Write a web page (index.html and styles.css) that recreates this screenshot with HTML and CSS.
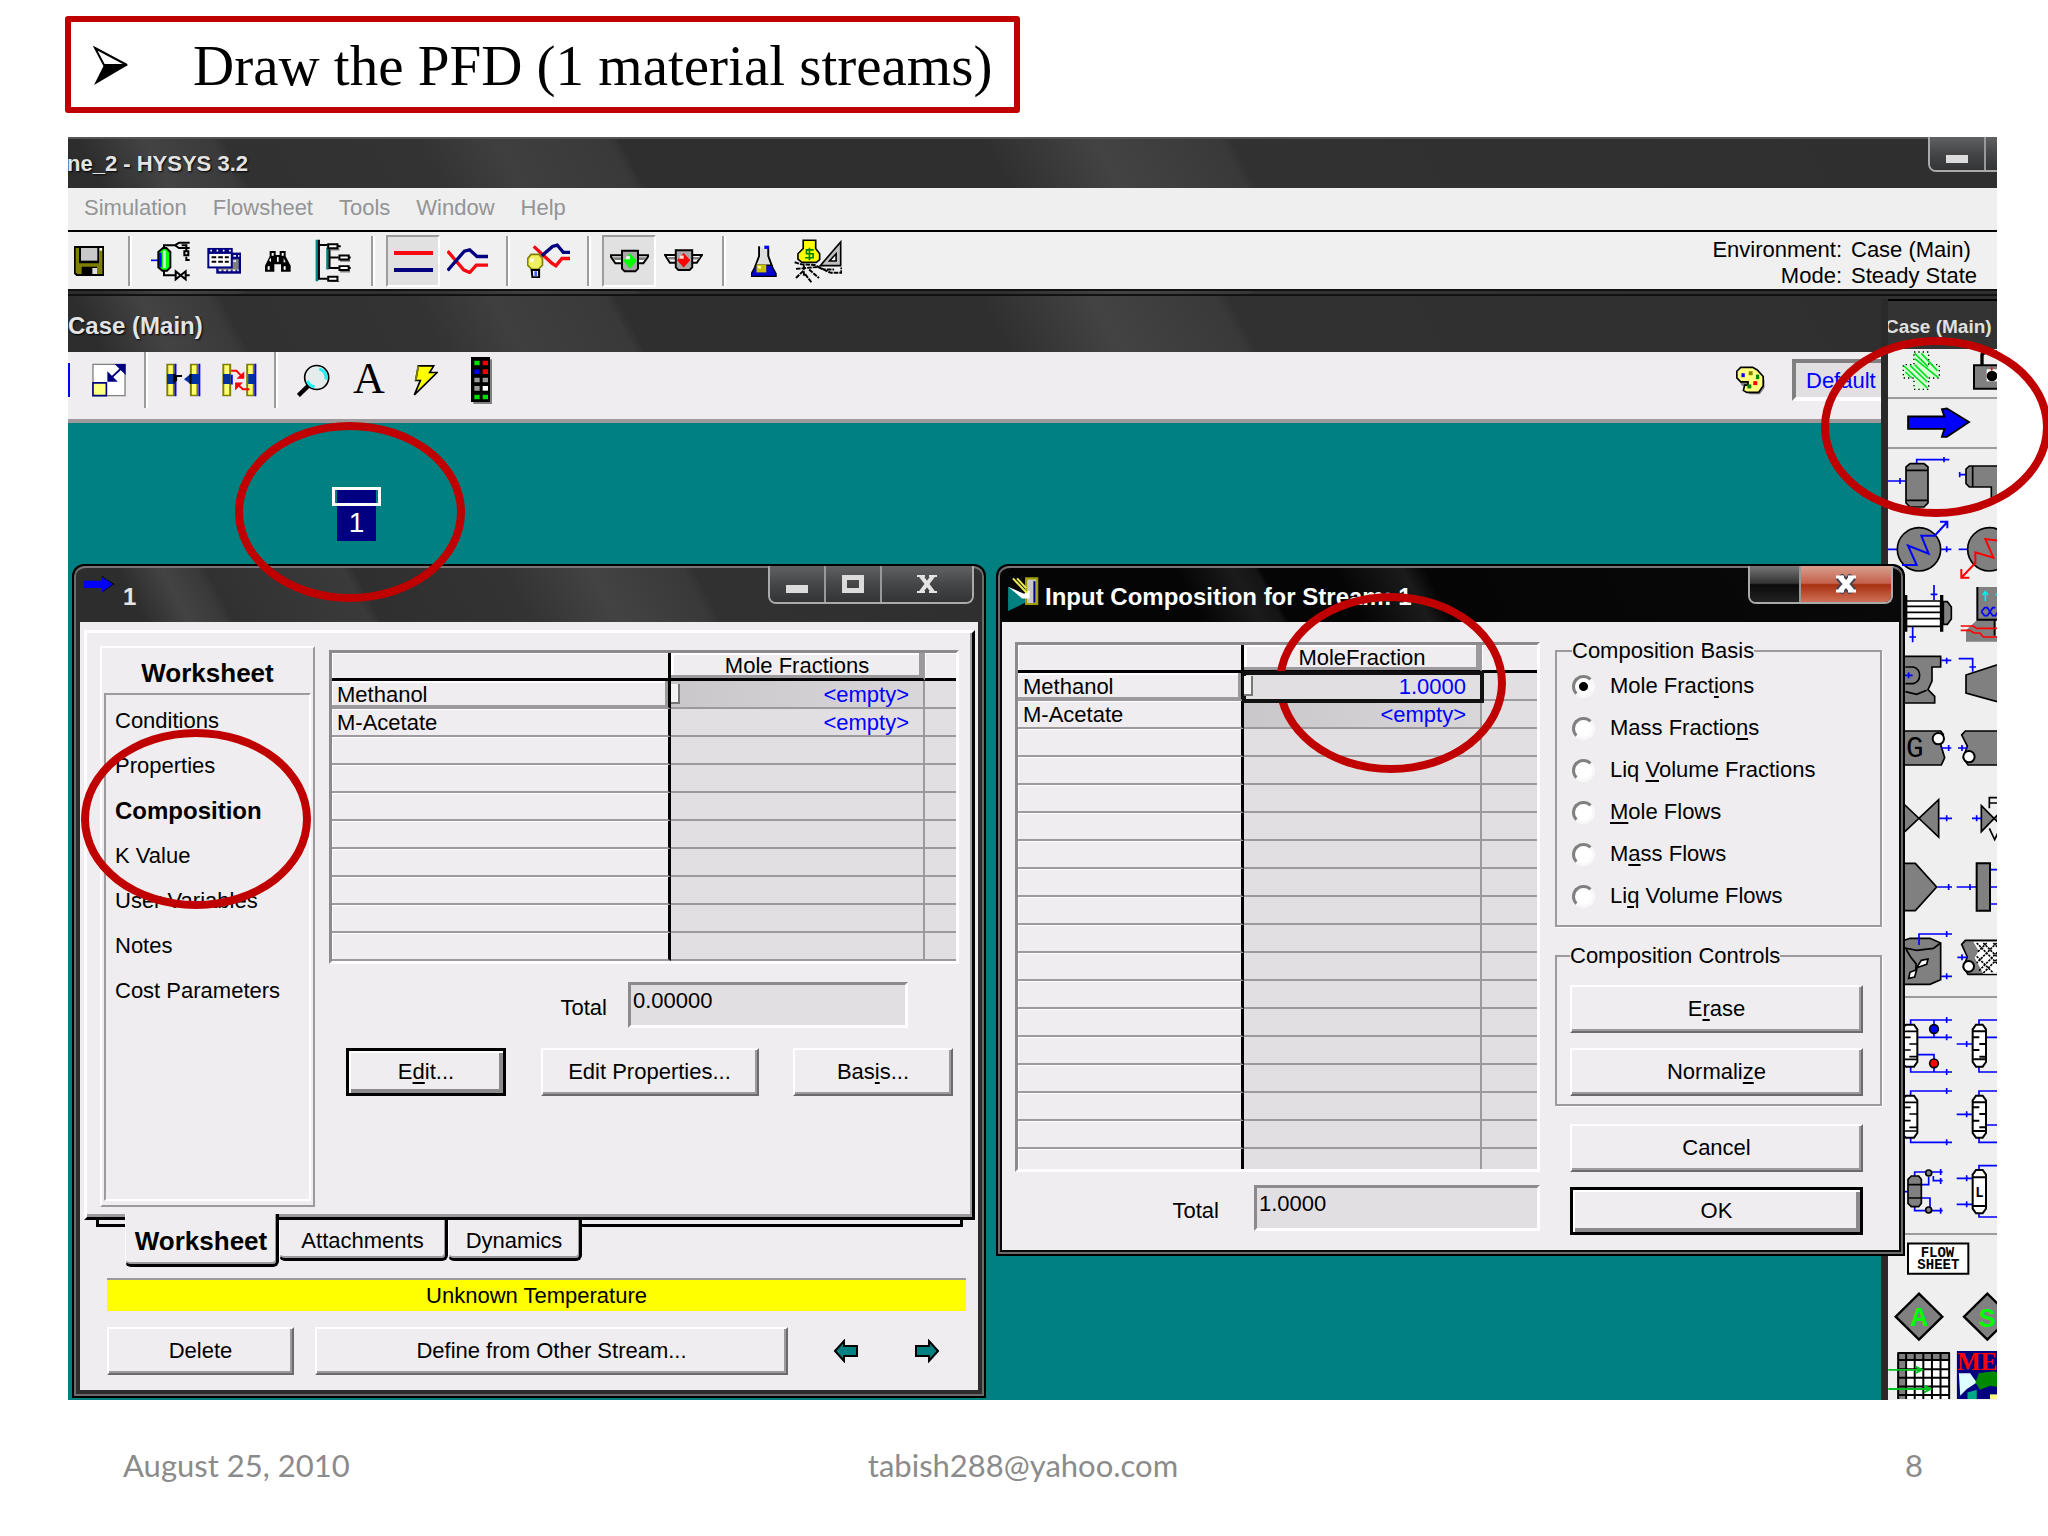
FILE: index.html
```
<!DOCTYPE html>
<html lang="en">
<head>
  <meta charset="UTF-8">
  <meta name="viewport" content="width=device-width, initial-scale=1.0">
  <title>Draw the PFD</title>
  <link rel="stylesheet" href="styles.css">
</head>
<body>
  <div class="slide">
    <h1 class="slide-title">
      <svg class="bullet" viewBox="0 0 36 40"><path d="M2 2L34 19H11Z" fill="#fff" stroke="#000" stroke-width="2"/><path d="M11 19H35L1 39Z"/></svg>
      Draw the PFD (1 material streams)
    </h1>

    <main class="app">
      <div class="clip">
      <header class="titlebar">
        <span class="caption">ne_2 - HYSYS 3.2</span>
        <div class="win-buttons cut">
          <button type="button" class="wb" aria-label="Minimize"><span class="min"></span></button>
          <button type="button" class="wb" aria-label="Maximize"></button>
        </div>
      </header>
      <nav class="menubar">
        <a href="#">Simulation</a>
        <a href="#">Flowsheet</a>
        <a href="#">Tools</a>
        <a href="#">Window</a>
        <a href="#">Help</a>
      </nav>

      <div class="toolbar">
        <button type="button" class="tool" aria-label="Save">
          <svg width="30" height="30" viewBox="43 78 90 90"><path d="M43 78H133V168H50L43 161Z"/><path d="M48 84H58V130H118V84H128V162H112V140H66V162H54L48 158Z" fill="#808000"/><path d="M64 84H113V122H64Z" fill="#c8c8c8"/><path d="M98 144H112V162H98Z" fill="#ddd"/><path d="M120 84H127V92H120Z" fill="#fff"/></svg>
        </button>
        <span class="sep"></span>
        <button type="button" class="tool" aria-label="PFD">
          <svg width="39" height="42" viewBox="268 60 117 126"><path d="M268 121H290" stroke="#0000ff" stroke-width="5"/><path d="M307 88V76H340M307 150V166H344M360 76H374V94M374 110V120H384M384 68H352L340 76L352 84H384" fill="none" stroke="#000" stroke-width="6"/><path d="M342 154V178L372 154V178ZM368 94H380V106H368ZM372 166H384" fill="none" stroke="#000" stroke-width="6"/><path d="M297 90L304 84H314L326 96V142L316 152H302L290 142V96Z" fill="#0f0" stroke="#000" stroke-width="6"/><path d="M292 98H300V142H292Z" fill="#00f"/><path d="M304 92H312V144H304Z" fill="#dfd"/></svg>
        </button>
        <button type="button" class="tool" aria-label="Workbook">
          <svg width="34" height="27" viewBox="440 82 103 80"><path d="M468 98H543V162H468Z" fill="#000080"/><path d="M474 118H536V152H474Z" fill="#808080"/><path d="M441 84H518V146H441Z" fill="#000080"/><path d="M447 102H512V140H447Z" fill="#fff"/><path d="M454 112H506M454 126H506" stroke="#000" stroke-width="6" stroke-dasharray="14 6"/><path d="M450 92H512" stroke="#fff" stroke-width="5" stroke-dasharray="5 14"/><path d="M520 108H538M520 124H534M476 152H536" stroke="#eee" stroke-width="5" stroke-dasharray="8 6"/></svg>
        </button>
        <button type="button" class="tool" aria-label="Find">
          <svg width="26" height="22" viewBox="620 90 78 64"><path d="M634 92H652V104H664V92H682V108L697 136V154H668V132H648V154H620V136L634 108Z"/><path d="M640 98H646V106H640ZM670 98H676V106H670ZM632 120L638 112V126ZM628 138H634V148H628ZM656 110H661V124H656ZM676 138H682V148H676ZM676 114L682 126H676Z" fill="#fff"/></svg>
        </button>
        <button type="button" class="tool" aria-label="Navigator">
          <svg width="37" height="43" viewBox="766 58 110 130"><path d="M774 60V186M806 84V150" stroke="#008080" stroke-width="8"/><path d="M780 60V178H806M780 76H806M812 84V146H840M812 114H840" fill="none" stroke="#000" stroke-width="6"/><path d="M812 90H842M844 124H874M844 156H874M812 188H842" stroke="#808080" stroke-width="6"/><path d="M808 74H836V86H808ZM842 108H870V120H842ZM842 140H870V152H842ZM808 172H836V184H808Z" fill="#fff" stroke="#000" stroke-width="6"/><path d="M836 80H846M870 114H876M870 146H876" stroke="#000" stroke-width="6"/></svg>
        </button>
        <span class="sep"></span>
        <button type="button" class="tool pressed" aria-label="Steady state mode">
          <svg width="39" height="22" viewBox="0 0 39 22"><path d="M0 3H39" stroke="#f80810" stroke-width="4"/><path d="M0 20H39" stroke="#000080" stroke-width="4"/></svg>
        </button>
        <button type="button" class="tool" aria-label="Dynamic mode">
          <svg width="41" height="27" viewBox="1164 82 123 80"><path d="M1166 94L1214 150L1232 158L1252 136H1287" fill="none" stroke="#f80810" stroke-width="10"/><path d="M1166 152L1216 94L1232 90L1254 110H1287" fill="none" stroke="#000080" stroke-width="10"/></svg>
        </button>
        <span class="sep"></span>
        <button type="button" class="tool" aria-label="Dynamics assistant">
          <svg width="43" height="35" viewBox="142 70 128 104"><path d="M162 80L216 130L228 138L246 116H270" fill="none" stroke="#f80810" stroke-width="10"/><path d="M186 108L218 80L232 76L250 98H270" fill="none" stroke="#000080" stroke-width="10"/><path d="M154 104H178L188 116V136L176 148H156L144 136V116Z" fill="#f0f060" stroke="#808000" stroke-width="5"/><path d="M152 116H162V126H152Z" fill="#fff"/><path d="M156 150H178V172H158Z" fill="#fff" stroke="#000" stroke-width="6"/><path d="M164 154H172V168H164Z" fill="#4060ff"/></svg>
        </button>
        <span class="sep"></span>
        <button type="button" class="tool pressed" aria-label="Solver active">
          <svg width="39" height="24" viewBox="390 94 117 70"><path d="M390 112H426V136H406ZM507 112H472V136H490Z" fill="#fff" stroke="#000" stroke-width="6"/><path d="M398 118H424V126H404ZM500 118H474V126H494Z" fill="#808080"/><path d="M426 98H474V152L466 160H434L426 152Z" fill="#a8a8a8" stroke="#000" stroke-width="6"/><path d="M450 106L470 128L450 152L430 128Z" fill="#0f0"/><path d="M440 114H450V124H436Z" fill="#dfd"/></svg>
        </button>
        <button type="button" class="tool" aria-label="Solver holding">
          <svg width="39" height="23" viewBox="551 88 117 70"><path d="M553 106H587V130H568ZM666 106H634V130H650Z" fill="#fff" stroke="#000" stroke-width="6"/><path d="M560 112H586V120H566ZM660 112H636V120H655Z" fill="#808080"/><path d="M586 92H636V144L628 152H594L586 144Z" fill="#a8a8a8" stroke="#000" stroke-width="6"/><path d="M610 100L630 122L610 144L590 122Z" fill="#f00"/><path d="M600 108H610V118H596Z" fill="#fdd"/></svg>
        </button>
        <span class="sep"></span>
        <button type="button" class="tool" aria-label="Basis environment">
          <svg width="26" height="32" viewBox="808 70 78 98"><path d="M832 74V104L820 136M860 74V104L872 136" fill="none" stroke="#000" stroke-width="6"/><path d="M836 80H856V106L866 132H824L836 106Z" fill="#ddd"/><path d="M822 132H870L884 158V166H808V158Z" fill="#0000d0" stroke="#000" stroke-width="4"/><path d="M824 130H854V154H824Z" fill="#c8c000"/><path d="M828 134H838V142H828Z" fill="#ff8"/><path d="M848 72H862V82H848Z" fill="#00f"/></svg>
        </button>
        <button type="button" class="tool" aria-label="Economics">
          <svg width="48" height="44" viewBox="938 54 146 132"><path d="M966 57H1004V82L1016 98V116L1006 124H962L950 114V98L966 82Z" fill="#ff0" stroke="#000" stroke-width="5"/><path d="M998 86H976V98H996V110H972M985 80V118" fill="none" stroke="#008000" stroke-width="5"/><path d="M1080 62V134H1018Z" fill="#c0c0c0" stroke="#000" stroke-width="5"/><path d="M1066 98V120H1046Z" fill="#fff" stroke="#000" stroke-width="5"/><path d="M940 124L960 130L1000 132L1030 146H1060M944 144L1010 138L1050 156H1082V140M968 134V166M984 146L1014 172M966 150L944 172M972 160L992 186" fill="none" stroke="#000" stroke-width="6" stroke-dasharray="14 3"/></svg>
        </button>
        <dl class="environment">
          <dt>Environment:</dt><dd>Case (Main)</dd>
          <dt>Mode:</dt><dd>Steady State</dd>
        </dl>
      </div>

      <section class="flowsheet">
        <header class="titlebar flow-title"><span class="caption big">Case (Main)</span></header>
        <div class="toolbar flow-tools">
          <span class="sliver"></span>
          <button type="button" class="tool" aria-label="Resize">
            <svg width="34" height="34" viewBox="93 424 104 102"><path d="M96 427H194V523H96Z" fill="#fff" stroke="#808080" stroke-width="4"/><path d="M96 484H137V523H96Z" fill="#ffff80" stroke="#000080" stroke-width="5"/><path d="M162 426H196V460ZM140 480V448L172 480Z" fill="#000080"/><path d="M150 470L186 436" stroke="#000080" stroke-width="6"/></svg>
          </button>
          <span class="sep"></span>
          <button type="button" class="tool" aria-label="Attach mode">
            <svg width="35" height="34" viewBox="330 424 105 104"><path d="M330 426H356V526H330ZM402 426H428V526H402Z" fill="#808000"/><path d="M336 431H350V521H336ZM408 431H422V521H408Z" fill="#ffff70"/><path d="M358 426V526M431 426V526" stroke="#00f" stroke-width="6"/><path d="M332 458H358V488H332ZM384 474L404 458H432V488H404Z" fill="#0030a0"/><path d="M360 480V464H378M354 486V458M404 458V488" fill="none" stroke="#000" stroke-width="6"/></svg>
          </button>
          <button type="button" class="tool" aria-label="Auto attach">
            <svg width="35" height="34" viewBox="497 424 105 104"><path d="M497 426H524V526H497ZM570 426H596V526H570Z" fill="#808000"/><path d="M503 431H518V521H503ZM576 431H590V521H576Z" fill="#ffff70"/><path d="M598 426V526M526 460V490" stroke="#00f" stroke-width="6"/><path d="M499 458H522V488H499ZM576 458H598V488H576Z" fill="#0030a0"/><path d="M524 448H540L556 464M580 504H560L544 490" fill="none" stroke="#f00" stroke-width="6"/><path d="M564 450V472H540ZM536 508V484H560Z" fill="#f00"/></svg>
          </button>
          <span class="sep"></span>
          <button type="button" class="tool" aria-label="Zoom">
            <svg width="33" height="33" viewBox="709 424 99 98"><path d="M713 518L742 490" stroke="#000" stroke-width="13"/><circle cx="768" cy="464" r="36" fill="#e4ecec" stroke="#000" stroke-width="5"/><path d="M776 438A28 28 0 0 1 796 470M740 474A28 28 0 0 0 762 492" fill="none" stroke="#20f0f0" stroke-width="9"/></svg>
          </button>
          <button type="button" class="tool letter" aria-label="Add text">A</button>
          <button type="button" class="tool" aria-label="Quick route">
            <svg width="25" height="31" viewBox="1058 428 75 92"><path d="M1074 430H1120L1108 450H1130L1062 517L1080 474H1066Z" fill="#ff0" stroke="#000" stroke-width="5"/><path d="M1074 430L1066 474" stroke="#808000" stroke-width="5"/></svg>
          </button>
          <button type="button" class="tool" aria-label="Colour scheme">
            <svg width="21" height="47" viewBox="1235 405 63 141"><path d="M1242 412H1298V546H1242Z" fill="#808080"/><path d="M1235 405H1292V540H1235Z"/><path d="M1245 416H1261V430H1245ZM1245 518H1261V532H1245ZM1270 518H1286V532H1270Z" fill="#0d0"/><path d="M1270 416H1286V430H1270ZM1270 442H1286V456H1270Z" fill="#e00"/><path d="M1245 442H1261V456H1245Z" fill="#00e"/><path d="M1245 467H1261V481H1245ZM1245 492H1261V506H1245ZM1270 467H1286V481H1270Z" fill="#999"/><path d="M1270 492H1286V506H1270Z" fill="#fff"/></svg>
          </button>
          <div class="scheme">
            <svg width="30" height="29" viewBox="168 700 90 88"><path d="M180 712H212L226 718L254 742V766L240 786H208L200 770L184 758L174 740Z" fill="#808080"/><path d="M182 704H218L232 712L250 732V760L236 780H200L190 774L194 758H204V748H182L170 736V716Z" fill="#ffff80" stroke="#000" stroke-width="5"/><path d="M184 722H194V734H184Z" fill="#00f"/><path d="M206 716H218V728H206Z" fill="#808000"/><path d="M228 726H238V740H228Z" fill="#080"/><path d="M220 746H232V758H220Z" fill="#f00"/><path d="M202 756H214V768H202Z" fill="#080"/></svg>
            <select class="scheme-select" aria-label="Colour scheme name"><option>Default</option></select>
          </div>
        </div>
        <div class="canvas"></div>
      </section>

      <!-- object palette, runs past the right edge -->
      <aside class="palette">
        <header class="palette-title">Case (Main)</header>
        <div class="palette-row short">
          <button type="button" aria-label="Drag"><svg viewBox="624 663 204 144"><path d="M702 672H746V710H778V750H746V784H702V750H670V710H702Z" fill="#d8ffd8" stroke="#000" stroke-width="4" stroke-dasharray="4 9"/><path d="M704 676L744 716M704 692L774 748M672 714L742 780M704 710L744 750M690 712L742 762M676 732L696 750M724 676L772 728" stroke="#00e020" stroke-width="5"/></svg></button>
          <button type="button" aria-label="Lock"><svg viewBox="828 663 204 144"><path d="M906 712V680L916 672H960" fill="none" stroke="#000" stroke-width="10"/><path d="M882 712H990V782H882Z" fill="#808080" stroke="#000" stroke-width="6"/><path d="M920 724H990V760H920Z" fill="#fff"/><circle cx="936" cy="744" r="16"/><path d="M935 718V728" stroke="#f00" stroke-width="5"/></svg></button>
        </div>
        <div class="palette-row stream">
          <button type="button" aria-label="Material stream"><svg viewBox="624 807 270 156"><path d="M678 864H796L788 840L804 838L876 882L804 930H788L796 904H678Z" fill="#00f" stroke="#000" stroke-width="6"/></svg></button>
        </div>
        <div class="palette-grid">
          <button type="button" aria-label="Separator"><svg viewBox="24 24 204 201"><path d="M24 120H76M60 111V129M110 68V56H208M192 48V64" fill="none" stroke="#00f" stroke-width="5"/><path d="M78 78L90 68H132L144 78V186L132 198H90L78 186ZM78 88H144M78 178H144" fill="#808080" stroke="#000" stroke-width="5"/></svg></button>
          <button type="button" aria-label="3 phase separator"><svg viewBox="228 24 204 201"><path d="M237 101H258M239 93V109" stroke="#00f" stroke-width="5"/><path d="M400 75H268L258 84V128L268 138H334V180H400V138M278 75V138" fill="#808080" stroke="#000" stroke-width="5"/></svg></button>
          <button type="button" aria-label="Cooler"><svg viewBox="24 225 204 201"><path d="M24 325H52M184 325H214M200 316V334" stroke="#00f" stroke-width="5"/><circle cx="117" cy="325" r="65" fill="#808080" stroke="#000" stroke-width="5"/><path d="M66 372H110L84 314L146 338L124 284H164L202 243M180 242H202V262" fill="none" stroke="#00f" stroke-width="6"/></svg></button>
          <button type="button" aria-label="Heater"><svg viewBox="228 225 204 201"><path d="M236 325H262" stroke="#00f" stroke-width="5"/><circle cx="328" cy="325" r="65" fill="#808080" stroke="#000" stroke-width="5"/><path d="M360 300L316 294L340 350L286 334V366L246 408M244 384V410H268" fill="none" stroke="#f00" stroke-width="6"/></svg></button>
          <button type="button" aria-label="Heat exchanger"><svg viewBox="24 426 204 201"><path d="M162 432V478M152 460H172M98 556V604M88 588H108" stroke="#00f" stroke-width="5"/><path d="M190 482H202L214 498V534L202 550H190Z" fill="#808080" stroke="#000" stroke-width="5"/><path d="M60 480H182V556H60ZM60 496H182M60 514H182M60 533H182" fill="#fff" stroke="#000" stroke-width="5"/><path d="M185 462V572M77 462V572" stroke="#000" stroke-width="10"/></svg></button>
          <button type="button" aria-label="Air cooler"><svg viewBox="228 426 204 201"><path d="M292 438H400V536H344V584H400V602H258V568L292 536Z" fill="#808080"/><path d="M292 438V536H400M344 536V584" fill="none" stroke="#000" stroke-width="6"/><path d="M316 480V456M308 462L316 452L324 462M346 461H400" fill="none" stroke="#0ee" stroke-width="5"/><path d="M304 512L314 500H322L338 524H346L360 502M304 512L314 524H322L338 500H346" fill="none" stroke="#00f" stroke-width="5"/><path d="M242 555H280L290 562H400M242 568H270L282 576H300L310 588H400" fill="none" stroke="#f00" stroke-width="5"/></svg></button>
          <button type="button" aria-label="Pump"><svg viewBox="24 627 204 201"><path d="M60 646H182V678H156V720L144 746L164 766V786H60Z" fill="#808080" stroke="#000" stroke-width="5"/><path d="M76 678H100A26 26 0 0 1 100 728H76M76 752L110 760L140 748" fill="none" stroke="#000" stroke-width="5"/><path d="M184 658H214M200 650V668M60 703H98M86 694V712" stroke="#00f" stroke-width="5"/></svg></button>
          <button type="button" aria-label="Compressor"><svg viewBox="228 627 204 201"><path d="M258 702L400 656V796L258 756Z" fill="#808080" stroke="#000" stroke-width="5"/><path d="M236 653H278V692M268 678H288" fill="none" stroke="#00f" stroke-width="5"/></svg></button>
          <button type="button" aria-label="Gas pipe"><svg viewBox="24 828 204 201"><path d="M60 870H182L190 880L180 904L194 950L184 972H60Z" fill="#808080" stroke="#000" stroke-width="5"/><circle cx="175" cy="893" r="17" fill="#fff" stroke="#000" stroke-width="6"/><path d="M182 921H214M206 912V930" stroke="#00f" stroke-width="5"/><text class="glyph plain" x="78" y="947">G</text></svg></button>
          <button type="button" aria-label="Pipe segment"><svg viewBox="228 828 204 201"><path d="M400 870H256L245 882L262 915L250 950L264 972H400Z" fill="#808080" stroke="#000" stroke-width="5"/><circle cx="267" cy="947" r="17" fill="#fff" stroke="#000" stroke-width="6"/><path d="M234 921H262M246 912V930" stroke="#00f" stroke-width="5"/></svg></button>
          <button type="button" aria-label="Valve"><svg viewBox="24 1029 204 201"><path d="M62 1080L176 1188V1076L62 1184Z" fill="#808080" stroke="#000" stroke-width="5"/><path d="M178 1132H216M200 1123V1141" stroke="#00f" stroke-width="5"/></svg></button>
          <button type="button" aria-label="Relief valve"><svg viewBox="228 1029 204 201"><path d="M304 1094L370 1160V1104L304 1172Z" fill="#808080" stroke="#000" stroke-width="5"/><path d="M276 1132H304M290 1123V1141" stroke="#00f" stroke-width="5"/><path d="M328 1102V1070H360M328 1086H360M328 1162L344 1196L360 1162" fill="none" stroke="#000" stroke-width="5"/></svg></button>
          <button type="button" aria-label="Mixer"><svg viewBox="24 1230 204 201"><path d="M60 1267H106L170 1338L106 1409H60Z" fill="#808080" stroke="#000" stroke-width="5"/><path d="M172 1338H216M206 1329V1347" stroke="#00f" stroke-width="5"/></svg></button>
          <button type="button" aria-label="Tee"><svg viewBox="228 1230 204 201"><path d="M230 1338H290M270 1329V1347M330 1286H400M330 1338H400M330 1389H400" stroke="#00f" stroke-width="5"/><path d="M290 1267H330V1409H290Z" fill="#808080" stroke="#000" stroke-width="6"/></svg></button>
          <button type="button" aria-label="Reactor"><svg viewBox="24 -9 204 201"><path d="M60 62L90 52H150L182 66V176L150 190H60Z" fill="#808080" stroke="#000" stroke-width="5"/><path d="M60 78L110 88L160 82L182 66M78 84L92 108L108 128V150" fill="none" stroke="#000" stroke-width="5"/><path d="M110 140L124 118L144 114L140 130ZM110 146L104 168L86 172L90 154Z" fill="#fff" stroke="#000" stroke-width="5"/><path d="M117 72V39H216M200 30V48M184 166H216M200 157V175" fill="none" stroke="#00f" stroke-width="5"/></svg></button>
          <button type="button" aria-label="Plug flow reactor"><svg viewBox="228 -9 204 201"><path d="M400 58H256L245 70L262 108L250 138L264 160H400Z" fill="#808080" stroke="#000" stroke-width="5"/><path d="M400 62H280L296 90L284 110L310 158H400Z" fill="#fff"/><path d="M290 66L380 156M310 66L400 156M340 66L400 126M290 106L340 156M400 66L310 156M380 66L296 150M350 66L290 126M320 66L294 92M400 106L350 156" stroke="#000" stroke-width="5" stroke-dasharray="7 3"/><circle cx="266" cy="136" r="16" fill="#fff" stroke="#000" stroke-width="6"/><path d="M232 109H262M246 100V118" stroke="#00f" stroke-width="5"/></svg></button>
        </div>
        <div class="palette-grid towers">
          <button type="button" aria-label="Distillation column"><svg viewBox="24 270 204 213"><path d="M92 316V300H216M200 291V309M114 352H216M200 343V361M114 404H162V456M92 440V456H216M200 447V465M162 300V352" fill="none" stroke="#00f" stroke-width="5"/><path d="M60 330L78 314H102L112 328V426L102 440H78L60 426Z" fill="#fff" stroke="#000" stroke-width="6"/><path d="M60 334H112M60 352H92M88 372H112M60 390H92M88 410H112M60 418H112" stroke="#000" stroke-width="5"/><circle cx="162" cy="327" r="13" fill="#00f" stroke="#000" stroke-width="5"/><circle cx="162" cy="430" r="13" fill="#f00" stroke="#000" stroke-width="5"/></svg></button>
          <button type="button" aria-label="Refluxed absorber"><svg viewBox="228 270 204 213"><path d="M230 372H278M260 363V381M297 316V300H400M320 352H400M297 440V456H400" fill="none" stroke="#00f" stroke-width="5"/><path d="M278 328L288 314H308L318 328V426L308 440H288L278 426ZM278 334H318M278 418H318M278 352H298M298 372H318M278 390H298M298 410H318" fill="#fff" stroke="#000" stroke-width="6"/></svg></button>
          <button type="button" aria-label="Absorber"><svg viewBox="24 483 204 213"><path d="M92 530V513H216M200 504V522M92 652V667H216M200 658V676" fill="none" stroke="#00f" stroke-width="5"/><path d="M60 544L78 527H102L112 541V639L102 653H78L60 639Z" fill="#fff" stroke="#000" stroke-width="6"/><path d="M60 547H112M60 562H92M88 582H112M60 602H92M88 622H112M60 633H112" stroke="#000" stroke-width="5"/></svg></button>
          <button type="button" aria-label="Reboiled absorber"><svg viewBox="228 483 204 213"><path d="M230 583H278M260 574V592M297 530V513H400M320 615H400M297 652V667H400" fill="none" stroke="#00f" stroke-width="5"/><path d="M278 541L288 527H308L318 541V639L308 653H288L278 639ZM278 547H318M278 633H318M278 562H298M298 582H318M278 602H298M298 622H318" fill="#fff" stroke="#000" stroke-width="6"/></svg></button>
          <button type="button" aria-label="Three phase distillation"><svg viewBox="24 696 204 213"><path d="M74 815H84M104 768V756H188M146 770V794H124M160 768V782H188M182 747V765M182 774V792M104 860V872H188M150 862V834H124M182 863V881" fill="none" stroke="#00f" stroke-width="5"/><path d="M84 778L94 768H116L124 778V850L116 860H94L84 850ZM84 794H124M84 834H124" fill="#808080" stroke="#000" stroke-width="5"/><circle cx="146" cy="759" r="9" fill="#808080" stroke="#000" stroke-width="5"/><circle cx="146" cy="870" r="9" fill="#808080" stroke="#000" stroke-width="5"/></svg></button>
          <button type="button" aria-label="Liquid extractor"><svg viewBox="228 696 204 213"><path d="M230 775H278M260 766V784M230 853H278M260 844V862M297 752V737H400M297 878V891H400" fill="none" stroke="#00f" stroke-width="5"/><path d="M278 764L288 750H308L318 764V866L308 880H288L278 866ZM278 772H318M278 858H318" fill="#fff" stroke="#000" stroke-width="6"/><text class="glyph small" x="286" y="830">L</text></svg></button>
        </div>
        <div class="palette-row sub">
          <button type="button" aria-label="Sub-flowsheet"><svg viewBox="24 950 204 138"><path d="M84 974H265V1065H84Z" fill="#fff" stroke="#000" stroke-width="6"/><text class="glyph small" x="122" y="1014">FLOW</text><text class="glyph small" x="112" y="1052">SHEET</text></svg></button>
        </div>
        <div class="palette-row logic">
          <button type="button" aria-label="Adjust"><svg viewBox="24 1088 204 207"><path d="M117 1123L187 1192L117 1261L47 1192Z" fill="#808080" stroke="#000" stroke-width="7"/><text class="glyph green" x="92" y="1220">A</text></svg></button>
          <button type="button" aria-label="Set"><svg viewBox="228 1088 204 207"><path d="M322 1123L392 1192L322 1261L252 1192Z" fill="#808080" stroke="#000" stroke-width="7"/><text class="glyph green" x="296" y="1222">S</text></svg></button>
        </div>
        <div class="palette-row last">
          <button type="button" aria-label="Spreadsheet"><svg viewBox="24 1295 204 145"><path d="M52 1300H210V1440H52Z" fill="#fff"/><path d="M52 1300H210V1322H76V1440H52Z" fill="#808080"/><path d="M54 1300V1440M78 1300V1440M104 1300V1440M130 1300V1440M156 1300V1440M182 1300V1440M208 1300V1440M52 1301H210M52 1322H210M52 1350H210M52 1376H210M52 1402H210M52 1428H210" stroke="#000" stroke-width="6"/><path d="M24 1352H126M106 1342L126 1352L106 1362M24 1410H152M132 1400L152 1410L132 1420" fill="none" stroke="#00c020" stroke-width="6"/></svg></button>
          <button type="button" aria-label="User operation"><svg viewBox="228 1295 204 145"><path d="M230 1295H400V1440H230Z" fill="#000080"/><path d="M236 1362H270L290 1390L260 1410L240 1430Z" fill="#dff"/><path d="M296 1362L340 1356L400 1376V1410L330 1400L300 1412L286 1390Z" fill="#080"/><path d="M262 1420L290 1412V1440H262Z" fill="#0a8"/><path d="M330 1426H400V1440H330Z" fill="#ff8"/><text class="glyph red" x="230" y="1352">ME</text></svg></button>
        </div>
      </aside>

      <div class="stream-node"><span class="stream-head"></span>1</div>

      <!-- stream property window -->
      <section class="window stream-window">
        <header class="window-title">
          <svg class="stream-icon" width="34" height="17" viewBox="64 110 90 50"><path d="M64 124H118V112L152 134L118 157V145H64Z" fill="#00f"/><path d="M118 112L152 134L118 157" fill="none" stroke="#000" stroke-width="4" stroke-dasharray="5 4"/></svg>
          <span>1</span>
          <div class="win-buttons">
            <button type="button" class="wb" aria-label="Minimize"><span class="min"></span></button>
            <button type="button" class="wb" aria-label="Maximize"><span class="max"></span></button>
            <button type="button" class="wb wide" aria-label="Close"><svg width="20" height="18" viewBox="0 0 20 18"><path d="M4 1L16 17M16 1L4 17" stroke="#e4e4e4" stroke-width="4"/><path d="M0 1H8M12 1H20M0 17H8M12 17H20" stroke="#e4e4e4" stroke-width="2"/></svg></button>
          </div>
        </header>
        <div class="window-body">
          <div class="sheet">
            <nav class="side">
              <h2>Worksheet</h2>
              <ul>
                <li><a href="#">Conditions</a></li>
                <li><a href="#">Properties</a></li>
                <li><a href="#" class="current">Composition</a></li>
                <li><a href="#">K Value</a></li>
                <li><a href="#">User Variables</a></li>
                <li><a href="#">Notes</a></li>
                <li><a href="#">Cost Parameters</a></li>
              </ul>
            </nav>
            <div class="sheet-main">
              <div class="grid-frame">
                <table class="grid">
                  <colgroup><col class="c-name"><col class="c-value"><col></colgroup>
                  <thead><tr><th></th><th class="raised">Mole Fractions</th><th></th></tr></thead>
                  <tbody>
                    <tr class="selected"><th scope="row">Methanol</th><td class="dim"><span class="handle"></span>&lt;empty&gt;</td><td></td></tr>
                    <tr><th scope="row">M-Acetate</th><td>&lt;empty&gt;</td><td></td></tr>
                    <tr><th></th><td></td><td></td></tr>
                    <tr><th></th><td></td><td></td></tr>
                    <tr><th></th><td></td><td></td></tr>
                    <tr><th></th><td></td><td></td></tr>
                    <tr><th></th><td></td><td></td></tr>
                    <tr><th></th><td></td><td></td></tr>
                    <tr><th></th><td></td><td></td></tr>
                    <tr><th></th><td></td><td></td></tr>
                  </tbody>
                </table>
              </div>
              <div class="total">
                <label for="total1">Total</label>
                <input type="text" id="total1" value="0.00000" readonly>
              </div>
              <div class="sheet-buttons">
                <button type="button" class="btn default w-edit"><span>E<u>d</u>it...</span></button>
                <button type="button" class="btn w-props">Edit Properties...</button>
                <button type="button" class="btn w-edit"><span>Bas<u>i</u>s...</span></button>
              </div>
            </div>
          </div>
          <div class="tabs">
            <span class="strip start"></span>
            <button type="button" class="tab active">Worksheet</button>
            <button type="button" class="tab">Attachments</button>
            <button type="button" class="tab narrow">Dynamics</button>
            <span class="strip"></span>
          </div>
          <div class="status">Unknown Temperature</div>
          <div class="actions">
            <button type="button" class="btn w-delete">Delete</button>
            <button type="button" class="btn w-define">Define from Other Stream...</button>
            <button type="button" class="arrow" aria-label="Previous"><svg width="26" height="24" viewBox="0 0 26 24"><path d="M2 12L11 2V7H24V17H11V22Z" fill="#008080" stroke="#000" stroke-width="2"/></svg></button>
            <button type="button" class="arrow" aria-label="Next"><svg width="26" height="24" viewBox="0 0 26 24"><path d="M24 12L15 2V7H2V17H15V22Z" fill="#008080" stroke="#000" stroke-width="2"/></svg></button>
          </div>
        </div>
      </section>

      <!-- composition dialog -->
      <section class="window input-window">
        <header class="window-title">
          <svg class="dialog-icon" width="34" height="34" viewBox="68 80 90 98"><path d="M70 108V178L112 158L130 148Z" fill="#008080"/><path d="M122 84H154V158H122Z" fill="#c8c8c8" stroke="#a0a000" stroke-width="6"/><path d="M146 92V154" stroke="#000080" stroke-width="6"/><path d="M70 108L92 126L110 142H132V118L116 128Z" fill="#fff"/><path d="M84 84L124 126M96 84L122 112" stroke="#e8e850" stroke-width="6"/></svg>
          <span>Input Composition for Stream: 1</span>
          <div class="win-buttons">
            <button type="button" class="wb blank" aria-label="Help"></button>
            <button type="button" class="wb close" aria-label="Close"><svg width="26" height="20" viewBox="0 0 26 20"><path d="M6 2L20 18M20 2L6 18" stroke="#445" stroke-width="9"/><path d="M7 3L19 17M19 3L7 17" stroke="#fff" stroke-width="5"/><path d="M3 3H11M15 3H23M3 17H11M15 17H23" stroke="#fff" stroke-width="3"/></svg></button>
          </div>
        </header>
        <div class="window-body dialog">
          <div class="dialog-left">
            <div class="grid-frame">
              <table class="grid">
                <colgroup><col class="c-name2"><col class="c-value2"><col></colgroup>
                <thead><tr><th></th><th class="raised">MoleFraction</th><th></th></tr></thead>
                <tbody>
                  <tr class="selected"><th scope="row">Methanol</th><td class="active-cell"><span class="handle"></span>1.0000</td><td></td></tr>
                  <tr><th scope="row">M-Acetate</th><td class="dim">&lt;empty&gt;</td><td></td></tr>
                  <tr><th></th><td></td><td></td></tr>
                  <tr><th></th><td></td><td></td></tr>
                  <tr><th></th><td></td><td></td></tr>
                  <tr><th></th><td></td><td></td></tr>
                  <tr><th></th><td></td><td></td></tr>
                  <tr><th></th><td></td><td></td></tr>
                  <tr><th></th><td></td><td></td></tr>
                  <tr><th></th><td></td><td></td></tr>
                  <tr><th></th><td></td><td></td></tr>
                  <tr><th></th><td></td><td></td></tr>
                  <tr><th></th><td></td><td></td></tr>
                  <tr><th></th><td></td><td></td></tr>
                  <tr><th></th><td></td><td></td></tr>
                  <tr><th></th><td></td><td></td></tr>
                  <tr><th></th><td></td><td></td></tr>
                  <tr class="partial"><th></th><td></td><td></td></tr>
                </tbody>
              </table>
            </div>
            <div class="total">
              <label for="total2">Total</label>
              <input type="text" id="total2" value="1.0000" readonly>
            </div>
          </div>
          <form class="dialog-right">
            <fieldset>
              <legend>Composition Basis</legend>
              <label class="radio"><input type="radio" name="basis" checked><span>Mole Fract<u>i</u>ons</span></label>
              <label class="radio"><input type="radio" name="basis"><span>Mass Fractio<u>n</u>s</span></label>
              <label class="radio"><input type="radio" name="basis"><span>Liq <u>V</u>olume Fractions</span></label>
              <label class="radio"><input type="radio" name="basis"><span><u>M</u>ole Flows</span></label>
              <label class="radio"><input type="radio" name="basis"><span>M<u>a</u>ss Flows</span></label>
              <label class="radio"><input type="radio" name="basis"><span>Li<u>q</u> Volume Flows</span></label>
            </fieldset>
            <fieldset class="controls">
              <legend>Composition Controls</legend>
              <button type="button" class="btn"><span>E<u>r</u>ase</span></button>
              <button type="button" class="btn"><span>Normali<u>z</u>e</span></button>
            </fieldset>
            <div class="controls outside">
              <button type="button" class="btn">Cancel</button>
              <button type="button" class="btn default">OK</button>
            </div>
          </form>
        </div>
      </section>
      </div>

      <!-- red rings over the capture -->
      <span class="ring ring-stream"></span>
      <span class="ring ring-page"></span>
      <span class="ring ring-value"></span>
      <span class="ring ring-palette"></span>
    </main>

    <footer class="slide-footer">
      <span>August 25, 2010</span>
      <span>tabish288@yahoo.com</span>
      <span>8</span>
    </footer>
  </div>
</body>
</html>
```
FILE: styles.css
```
:root {
  --ui: "Liberation Sans", Arial, sans-serif;
  --text: 22px;
  --head: 24px;
  --face: #efedef;
  --cell: #e1dfe1;
  --line: #9c9a9c;
  --red: #c00000;
}
* {
  box-sizing: border-box;
}
body {
  margin: 0;
  background: #fff;
  color: #000;
  font-family: var(--ui);
  font-size: var(--text);
  overflow-x: hidden;
}
button, input, select {
  font: inherit;
  color: inherit;
  border: none;
  background: none;
  padding: 0;
  margin: 0;
  border-radius: 0;
}
a {
  color: inherit;
  text-decoration: none;
}
svg {
  display: block;
}
u {
  text-underline-offset: 3px;
  text-decoration-thickness: 2px;
}
.slide {
  padding: 16px 51px 0 65px;
}
.slide-title {
  display: flex;
  align-items: center;
  width: max-content;
  height: 97px;
  margin: 0;
  padding: 2px 22px 0;
  border: 6px solid var(--red);
  border-radius: 3px;
  font: 57px "Liberation Serif", serif;
}
.bullet {
  width: 36px;
  height: 40px;
  margin-right: 64px;
}

/* main window */
.app {
  position: relative;
  margin: 24px 0 0 3px;
}
.clip {
  position: relative;
  overflow: hidden;
}
.titlebar {
  position: relative;
  display: flex;
  align-items: center;
  height: 51px;
  background: linear-gradient(62deg, #2d2d2d 30px, #434344 90px, #3a3a3b 150px, #323132 160px, #333 330px, #3f3f40 400px, #39393a 500px, #302f30 510px, #302f30 830px, #434344 930px, #39393a 1040px, #323132 1050px, #2f2f2f 100%);
  border-top: 2px solid #555;
  color: #e4e4e4;
  font-weight: bold;
  text-shadow: 1px 1px 2px #000;
}
.caption {
  margin-left: -1px;
}
.win-buttons {
  position: absolute;
  top: -2px;
  right: 8px;
  display: flex;
  height: 38px;
  border: 2px solid #aaa;
  border-top: 0;
  border-radius: 0 0 8px 8px;
  overflow: hidden;
}
.win-buttons.cut {
  right: -47px;
  height: 35px;
}
.wb {
  display: flex;
  align-items: center;
  justify-content: center;
  width: 56px;
  height: 100%;
  background: linear-gradient(#606163, #454648 50%, #333435);
  border-right: 2px solid #999;
}
.wb:last-child {
  border-right: 0;
}
.wb.wide {
  width: 90px;
}
.wb.blank {
  width: 51px;
  background: linear-gradient(#777, #333 48%, #0b0b0b 52%, #222);
}
.wb.close {
  width: 90px;
  background: linear-gradient(#d9a090, #c4604a 48%, #a83010 52%, #d07058);
}
.min {
  width: 22px;
  height: 8px;
  margin-top: 10px;
  background: #dcdcdc;
}
.max {
  width: 22px;
  height: 18px;
  border: 5px solid #dcdcdc;
}
.menubar {
  display: flex;
  align-items: center;
  gap: 26px;
  height: 42px;
  padding: 0 16px 2px;
  background: #efefef;
  color: #949494;
}
.toolbar {
  display: flex;
  align-items: center;
  height: 59px;
  background: #f0f0f0;
  border-top: 2px solid #000;
}
.tool {
  display: flex;
  align-items: center;
  justify-content: center;
  flex: none;
  width: 54px;
  height: 52px;
}
.tool:first-child {
  margin-left: -6px;
}
.tool.pressed {
  background: #e1e1e1;
  border: 2px solid #9c9c9c;
  border-right-color: #fff;
  border-bottom-color: #fff;
}
.sep {
  flex: none;
  width: 27px;
  height: 50px;
  background: linear-gradient(90deg, #9c9c9c 2px, #fff 2px) center / 4px 100% no-repeat;
}
.environment {
  display: grid;
  grid-template-columns: auto 130px;
  column-gap: 9px;
  margin: 4px 16px 0 auto;
  line-height: 26px;
  text-align: right;
  white-space: nowrap;
}
.environment dd {
  margin: 0;
  text-align: left;
}

/* flowsheet window */
.flow-title {
  height: 63px;
  padding-top: 4px;
  border-top: 7px double #111;
}
.caption.big {
  margin-left: 0;
  font-size: var(--head);
}
.flow-tools {
  height: 67px;
  padding-bottom: 11px;
  border-top: 0;
  background: #efedef;
}
.flow-tools .tool {
  width: 56px;
  height: 56px;
}
.flow-tools .sep {
  width: 18px;
  height: 56px;
}
.sliver {
  width: 2px;
  height: 34px;
  margin-right: 11px;
  background: #00f;
}
.letter {
  font: 44px "Liberation Serif", serif;
  padding-bottom: 4px;
}
.scheme {
  display: flex;
  align-items: center;
  gap: 26px;
  margin-left: auto;
}
.scheme-select {
  appearance: none;
  width: 205px;
  height: 42px;
  padding-left: 10px;
  background: #e1dfe1;
  border: 4px solid #808080;
  border-right-color: #fff;
  border-bottom-color: #fff;
  color: #00f;
}
.canvas {
  height: 981px;
  background: #008080;
  border-top: 4px solid #9c9a9c;
}
.stream-node {
  position: absolute;
  left: 269px;
  top: 352px;
  width: 39px;
  height: 52px;
  padding-top: 17px;
  background: #000080;
  color: #fff;
  font: 28px/34px "Liberation Sans", sans-serif;
  text-align: center;
}
.stream-head {
  position: absolute;
  left: -5px;
  top: -2px;
  width: 49px;
  height: 19px;
  border: 3px solid #fff;
}

/* object palette */
.palette {
  position: absolute;
  right: 0;
  top: 162px;
  width: 116px;
  bottom: 0;
  overflow: hidden;
  background: #f0eff0;
  border-left: 7px solid #2a2a2a;
}
.palette-title {
  height: 50px;
  padding-top: 13px;
  margin-left: -3px;
  background: #333;
  border-top: 2px solid #000;
  color: #e0e0e0;
  font-size: 19px;
  font-weight: bold;
  line-height: 26px;
  white-space: nowrap;
}
.palette-row, .palette-grid {
  display: grid;
  grid-template-columns: 68px 68px;
  grid-auto-rows: 67px;
}
.palette-row.short {
  grid-auto-rows: 48px;
  border-bottom: 2px solid #9c9c9c;
}
.palette-row.stream {
  grid-template-columns: 90px;
  grid-auto-rows: 48px;
  border-bottom: 2px solid #9c9c9c;
}
.palette-grid.towers {
  grid-auto-rows: 71px;
  padding-top: 12px;
  padding-bottom: 10px;
  margin-top: 11px;
  border-top: 2px solid #9c9c9c;
  border-bottom: 2px solid #9c9c9c;
}
.palette-row.sub {
  grid-auto-rows: 47px;
}
.palette-row.logic {
  grid-auto-rows: 69px;
}
.palette-row.last {
  grid-auto-rows: 48px;
}
.palette svg {
  width: 100%;
  height: 100%;
  overflow: visible;
}
.glyph {
  font: bold 88px "Liberation Mono", monospace;
}
.glyph.plain {
  font-weight: normal;
}
.glyph.small {
  font-size: 42px;
}
.glyph.green {
  font-size: 84px;
  fill: #0f0;
}
.glyph.red {
  font: bold 76px "Liberation Serif", serif;
  fill: #f00;
}

/* floating windows */
.window {
  position: absolute;
  top: 427px;
  padding: 0 6px 6px;
  background: #2d2c2d;
  border: 2px solid #000;
  border-radius: 12px 12px 0 0;
  box-shadow: inset 0 0 0 2px #6c6c6c;
}
.stream-window {
  left: 4px;
  width: 914px;
}
.input-window {
  left: 928px;
  width: 909px;
  padding: 0 4px 4px;
  background: #0a090a;
}
.window-title {
  position: relative;
  display: flex;
  height: 56px;
  margin: 0 -4px;
  border-top: 2px solid #777;
  border-radius: 10px 10px 0 0;
  background: linear-gradient(62deg, #2d2d2d 60px, #434344 100px, #3a3a3b 130px, #323132 140px, #3a3a3a 260px, #2f2f2f 270px, #333 400px, #434344 480px, #39393a 560px, #323132 570px, #2f2f2f 100%);
  color: #e4e4e4;
  font-size: var(--head);
  font-weight: bold;
  line-height: 30px;
}
.input-window .window-title {
  margin: 0 -2px;
  background: linear-gradient(62deg, #050505 180px, #1c1b1c 230px, #151415 250px, #050505 255px, #050505 320px, #1c1b1c 380px, #050505 400px, #0a090a 100%);
  color: #fff;
}
.window-title span {
  margin: 14px 0 0 5px;
}
.window-title .wb .min {
  margin: 10px 0 0;
}
.window-title .wb .max {
  margin: 0;
}
.stream-icon {
  margin: 8px 2px 0 6px;
}
.dialog-icon {
  margin: 9px 0 0 6px;
}
.window-body {
  background: var(--face);
  padding: 8px 3px 15px 4px;
}
.sheet {
  display: flex;
  gap: 14px;
  height: 590px;
  padding: 13px 13px 10px;
  border: 3px solid #fff;
  border-right-color: #000;
  border-bottom-color: #000;
  box-shadow: inset -2px -3px 0 #9c9a9c;
}
.side {
  width: 215px;
  padding: 0 2px 4px;
  display: flex;
  flex-direction: column;
  border: 2px solid #fff;
  border-right-color: var(--line);
  border-bottom-color: var(--line);
}
.side h2 {
  margin: 0;
  height: 45px;
  padding-top: 10px;
  text-align: center;
  font-size: 26px;
  line-height: 30px;
}
.side ul {
  flex: 1;
  list-style: none;
  margin: 0;
  padding: 3px 0 0 9px;
  line-height: 45px;
  border: 2px solid var(--line);
  border-right-color: #fff;
  border-bottom-color: #fff;
}
.side .current {
  font-size: var(--head);
  font-weight: bold;
}
.side li {
  height: 45px;
  white-space: nowrap;
}
.sheet-main {
  flex: 1;
  padding-top: 4px;
}
.grid-frame {
  border: 3px solid #8c8a8c;
  border-right-color: #fff;
  border-bottom-color: #fff;
}
.grid {
  width: 100%;
  table-layout: fixed;
  border-collapse: separate;
  border-spacing: 0;
  line-height: 25px;
}
.c-name {
  width: 339px;
}
.c-value {
  width: 254px;
}
.c-name2 {
  width: 226px;
}
.c-value2 {
  width: 238px;
}
.grid th, .grid td {
  position: relative;
  height: 28px;
  padding: 0 5px;
  border-bottom: 2px solid var(--line);
  border-right: 2px solid var(--line);
  font-weight: normal;
}
.grid th {
  background: var(--face);
  text-align: left;
  box-shadow: inset 1px 1px 0 #fff;
}
.grid tr th:first-child {
  border-right: 3px solid #000;
}
.grid tr > :last-child {
  border-right: 0;
}
.grid thead th {
  border-bottom: 3px solid #000;
}
.grid thead .raised {
  text-align: center;
  box-shadow: inset -4px -3px 0 #9c9a9c, inset 3px 2px 0 #fff;
}
.grid .selected th:first-child {
  box-shadow: inset -3px -2px 0 #9c9a9c, inset 1px 2px 0 #fff;
}
.grid td {
  padding-right: 14px;
  background: var(--cell);
  color: #00f;
  text-align: right;
}
.grid td.dim {
  background: linear-gradient(90deg, #c9c7c9, #d8d6d8);
}
.grid td.active-cell {
  outline: 4px solid #111;
  outline-offset: -2px;
  z-index: 1;
}
.grid .partial > * {
  height: 20px;
  border-bottom: 0;
}
.handle {
  position: absolute;
  left: 0;
  top: 3px;
  width: 9px;
  height: 20px;
  background: #f4f4f4;
  border-right: 2px solid #777;
  border-bottom: 2px solid #777;
}
.total {
  display: flex;
  align-items: center;
  justify-content: flex-end;
  gap: 21px;
  margin: 18px 51px 20px 0;
}
.total label {
  padding-top: 6px;
}
.total input {
  width: 280px;
  height: 46px;
  padding: 0 2px 8px;
  background: var(--cell);
  border: 3px solid #8c8a8c;
  border-right-color: #fff;
  border-bottom-color: #fff;
}
.sheet-buttons {
  display: flex;
  justify-content: space-between;
  padding: 0 6px 0 17px;
}
.btn {
  height: 48px;
  background: var(--face);
  border: 2px solid #fff;
  border-right-color: #6c6a6c;
  border-bottom-color: #6c6a6c;
  box-shadow: inset -2px -2px 0 #9c9a9c;
}
.btn.default {
  border: 3px solid #000;
  box-shadow: inset 2px 2px 0 #fff, inset -4px -4px 0 #8c8a8c;
}
.w-edit {
  width: 160px;
}
.w-props {
  width: 218px;
}
.w-delete {
  width: 187px;
}
.w-define {
  width: 473px;
  margin: 0 17px 0 21px;
}
.tabs {
  display: flex;
  align-items: flex-start;
  height: 46px;
  padding: 0 12px;
}
.strip {
  flex: 1;
  height: 7px;
  border-bottom: 3px solid #000;
  border-right: 3px solid #000;
}
.strip.start {
  flex: none;
  width: 29px;
  border-right: 0;
  border-left: 3px solid #000;
}
.tab {
  position: relative;
  width: 169px;
  height: 41px;
  padding-top: 4px;
  background: var(--face);
  border: 3px solid #000;
  border-top: 0;
  border-left: 1px solid #fff;
  border-radius: 0 0 6px 6px;
  box-shadow: inset -1px -2px 0 #9c9a9c;
}
.tab.active {
  width: 154px;
  height: 53px;
  margin-top: -6px;
  font-size: 26px;
  font-weight: bold;
}
.tab.narrow {
  width: 134px;
}
.status {
  margin: 12px 9px 16px 23px;
  height: 33px;
  border-top: 2px solid #9c9a9c;
  background: #ff0;
  line-height: 31px;
  text-align: center;
}
.actions {
  display: flex;
  padding-left: 23px;
}
.arrow {
  display: flex;
  align-items: center;
  justify-content: center;
  width: 81px;
}

/* composition dialog */
.dialog {
  display: flex;
  gap: 15px;
  padding: 15px 17px 15px 13px;
}
.dialog-left {
  width: 525px;
  padding-top: 5px;
}
.dialog .total {
  gap: 35px;
  margin: 13px 0 0;
}
.dialog .total input {
  width: 286px;
}
.dialog-right {
  flex: 1;
}
fieldset {
  margin: 0 0 15px;
  padding: 0 15px 8px;
  border: 2px solid var(--line);
  box-shadow: 1px 1px 0 #fff;
}
legend {
  height: 28px;
  line-height: 28px;
  padding: 0;
}
.radio {
  display: flex;
  align-items: center;
  gap: 15px;
  height: 42px;
}
.radio input {
  appearance: none;
  width: 23px;
  height: 23px;
  border: 3px solid #808080;
  border-right-color: #f8f8f8;
  border-bottom-color: #f8f8f8;
  border-radius: 50%;
  background: #fff;
}
.radio input:checked {
  background: radial-gradient(circle, #000 4px, #fff 5px);
}
.controls {
  display: flex;
  flex-direction: column;
  gap: 15px;
  padding: 15px 17px 8px 13px;
}
.controls.outside {
  padding: 3px 19px 0 15px;
}

/* rings */
.ring {
  position: absolute;
  width: 230px;
  height: 180px;
  border: 8px solid var(--red);
  border-radius: 50%;
  pointer-events: none;
}
.ring-stream {
  left: 167px;
  top: 285px;
}
.ring-page {
  left: 13px;
  top: 592px;
}
.ring-value {
  left: 1208px;
  top: 456px;
}
.ring-palette {
  right: -54px;
  top: 200px;
}

.slide-footer {
  display: grid;
  grid-template-columns: 1fr auto 1fr;
  align-items: center;
  padding: 0 74px 0 58px;
  height: 130px;
  color: #8b8b8b;
  font: 31px Lato, sans-serif;
}
.slide-footer span:last-child {
  text-align: right;
}
```
